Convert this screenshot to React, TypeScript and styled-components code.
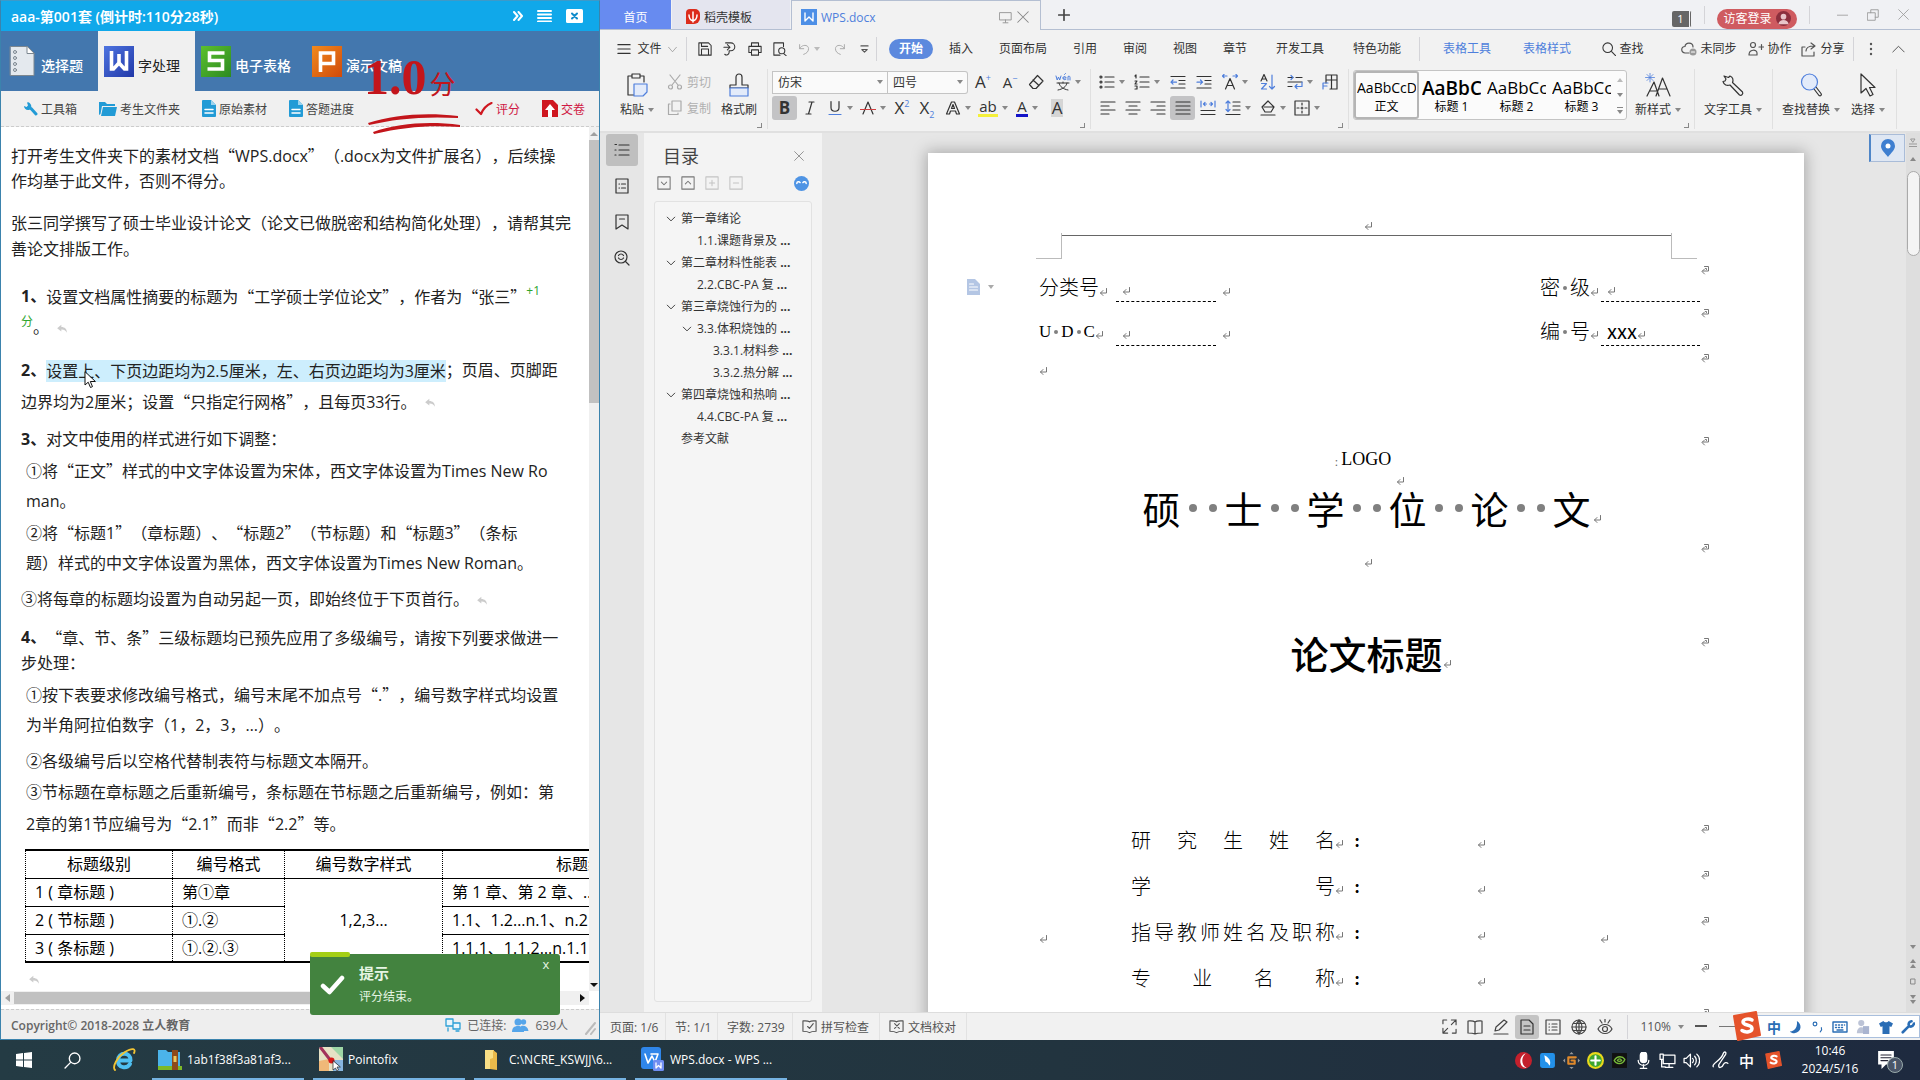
import React from "react";
import styled, { createGlobalStyle, css } from "styled-components";

const UI = `"Open Sans", "Noto Sans CJK SC", sans-serif`;
const CJK = `"Noto Sans CJK SC", sans-serif`;
const SERIF = `"Liberation Serif", "Noto Sans CJK SC", serif`;

const Global = createGlobalStyle`
  * { box-sizing: border-box; }
  body { margin: 0; font-family: ${UI}; font-size: 12px; color: #333; text-spacing-trim: space-all; overflow: hidden; }
  button, select, input { font: inherit; color: inherit; margin: 0; }
  button { background: none; border: 0; padding: 0; cursor: pointer; white-space: nowrap; }
  p, h1, h2, ul { margin: 0; padding: 0; font-weight: inherit; }
  svg { flex: none; display: block; }
`;

/* ---------- icons ---------- */
type IcProps = { w?: number; h?: number; box?: string; c?: string; sw?: number; fill?: string; children?: React.ReactNode; d?: string };
const Ic = ({ w = 16, h, box = "0 0 16 16", c = "#444", sw = 1.2, fill = "none", d, children }: IcProps) => (
  <svg width={w} height={h ?? w} viewBox={box} fill={fill} stroke={c} strokeWidth={sw} strokeLinejoin="round" strokeLinecap="round" aria-hidden="true">
    {d && <path d={d} />}
    {children}
  </svg>
);
const Caret = ({ c = "#888" }: { c?: string }) => (
  <Ic w={6} h={4} box="0 0 6 4" c="none" fill={c} d="M0 0h6L3 4z" />
);
const Mark = () => <Ic w={9} h={9} box="0 0 9 9" c="#777" sw={1} d="M7.500.5v4.500h-6M4 2.500L1.500 5L4 7.500" />;
const EndMark = () => <Ic w={10} h={10} box="0 0 10 10" c="#777" sw={1} d="M4.500 1.500h4v4.500h-6M4.500 4L2 6.500L4.500 9M5.500 3.500h1v1" />;
const Undo = () => <Ic w={12} h={10} box="0 0 14 12" c="none" fill="#ccc" d="M5 1L0 5l5 4V6.500c3-.2 5 .8 6.500 4C12 6 9 3.500 5 3.500z" />;
const Pointer = () => (
  <Ic w={12} h={18} box="0 0 12 18" c="#111" sw={1} fill="#fff" d="M1 1v13l3.200-2.800L6.500 16.500l2-.9L6.300 10.500H11z" />
);

/* ---------- shell ---------- */
const Screen = styled.div`display: flex; flex-direction: column; height: 100vh; overflow: hidden;`;
const Windows = styled.div`display: flex; flex: 1; min-height: 0;`;

/* ---------- exam panel ---------- */
const Exam = styled.section`
  position: relative; flex: none; width: 600px; display: flex; flex-direction: column;
  background: #fff; border: 1px solid #3b83ad; border-top-color: #3d9ac9;
`;
const ExamTitle = styled.header`
  height: 30px; flex: none; background: #10a8ea; color: #fff; display: flex; align-items: center;
  padding: 0 16px 0 10px; font-size: 14px; font-weight: 600; gap: 14px;
  span { flex: 1; }
`;
const ExamTabs = styled.nav`height: 60px; flex: none; display: flex; background: #4377ae;`;
const ExamTab = styled.button<{ $on?: boolean }>`
  display: flex; align-items: center; gap: 4px; padding: 0 15px 0 6px; font-size: 14px;
  color: ${(p) => (p.$on ? "#222" : "#fff")}; background: ${(p) => (p.$on ? "#f0f0f0" : "none")};
  font-weight: ${(p) => (p.$on ? 400 : 500)};
  span { padding-top: 8px; }
`;
const ExamTools = styled.div`
  height: 36px; flex: none; display: flex; align-items: center; background: #f0f0f0; padding: 0 14px 0 22px;
  border-bottom: 1px dashed #ccc;
`;
const ExamTool = styled.button<{ $red?: boolean }>`
  display: flex; align-items: center; gap: 3px; margin-right: 22px; font-size: 12px; height: 24px;
  color: ${(p) => (p.$red ? "#cf1743" : "#444")};
  &:last-child { margin-right: 0; }
`;
const Push = styled.div`flex: 1;`;
const Reader = styled.div`flex: 1; min-height: 0; display: flex;`;
const Paper = styled.article`
  flex: 1; min-width: 0; overflow: hidden; padding: 15px 0 0 10px; font-size: 16px; color: #222; background: #fff;
`;
const Block = styled.div<{ $lh?: number; $in?: number; $gap?: number }>`
  line-height: ${(p) => p.$lh ?? 31}px; padding-left: ${(p) => p.$in ?? 10}px; margin-bottom: ${(p) => p.$gap ?? 0}px;
  & > p { height: ${(p) => p.$lh ?? 31}px; display: flex; white-space: pre; }
`;
const Cn = styled.span`font-family: ${CJK};`;
const Lit = styled.mark`background: #cdeefd; color: inherit; height: 22px; line-height: 22px; align-self: center;`;
const Score = styled.sup`color: #2fa52f; font-size: 12px; line-height: 20px; align-self: flex-start;`;
const After = styled.span`padding: 12px 0 0 8px;`;

const Mixed = ({ t }: { t: string }) => (
  <span>{t.split(/([“”]+)/).map((s, i) => (i % 2 ? <Cn key={i}>{s}</Cn> : s))}</span>
);
const Row = ({ t, n, children }: { t?: string; n?: string; children?: React.ReactNode }) => (
  <p>
    {n && <b>{n}</b>}
    {t && <Mixed t={t} />}
    {children}
  </p>
);

const Levels = styled.table`
  border-collapse: collapse; table-layout: fixed; width: 740px; margin: 10px 0 0 14px; color: #000; font-size: 16px;
  border-top: 2px solid #000; border-bottom: 2px solid #000;
  th, td { height: 28px; padding: 0 9px; line-height: 24px; border: 1px solid #000; border-left: 1px dotted #000; border-right: 1px dotted #000; font-weight: 400; text-align: left; white-space: pre; }
  th { text-align: center; border-top: 0; }
  td[rowspan] { text-align: center; }
`;
const Track = styled.div<{ $across?: boolean }>`
  flex: none; background: #f0f0f0; display: flex; align-items: center; gap: 4px;
  ${(p) => (p.$across ? css`height: 14px; padding: 0 4px; margin-right: 10px;` : css`width: 10px; flex-direction: column; padding: 5px 0 4px;`)}
`;
const Thumb = styled.div<{ $w?: string; $h?: string }>`
  background: #c1c1c1; width: ${(p) => p.$w ?? "100%"}; height: ${(p) => p.$h ?? "100%"};
`;
const ExamFoot = styled.footer`
  height: 30px; flex: none; margin-top: 4px; border-top: 1px dashed #ccc; background: #eee; color: #666; font-size: 12px;
  display: flex; align-items: center; padding: 0 3px 0 10px; gap: 6px;
  b { flex: 1; font-weight: 600; }
`;
const Grade = styled.div`
  position: absolute; left: 363px; top: 44px; width: 96px; color: #c3151b; pointer-events: none;
  div { display: flex; align-items: baseline; height: 64px; font-family: ${SERIF}; }
  strong { font-size: 50px; line-height: 64px; font-weight: 700; }
  span { font-size: 26px; line-height: 64px; margin-left: 3px; }
`;
const Toast = styled.aside`
  position: absolute; left: 309px; bottom: 24px; width: 250px; height: 61px; background: #43833f; color: #e6f5e4;
  border-radius: 3px; display: flex; align-items: center; gap: 14px; padding: 0 6px 0 10px;
  &::before { content: ""; position: absolute; left: 0; top: -2px; width: 40px; height: 5px; border-radius: 2px; background: #a4cf16; }
  div { flex: 1; display: flex; flex-direction: column; gap: 4px; line-height: 20px; }
  b { font-size: 15px; }
  button { align-self: flex-start; line-height: 20px; font-size: 13px; width: 16px; }
`;
const Float = styled.div<{ $x: number; $y: number }>`position: absolute; left: ${(p) => p.$x}px; top: ${(p) => p.$y}px; pointer-events: none;`;

const AppTile = ({ from, to, d }: { from: string; to: string; d: string }) => (
  <svg width="30" height="31" viewBox="0 0 30 31" aria-hidden="true">
    <defs>
      <linearGradient id={"g" + to.slice(1)} x1="0" y1="0" x2="1" y2="1">
        <stop offset="0" stopColor={from} />
        <stop offset="1" stopColor={to} />
      </linearGradient>
    </defs>
    <rect width="30" height="31" fill={`url(#g${to.slice(1)})`} />
    <path d={d} fill="none" stroke="#fff" strokeWidth="3.600" />
  </svg>
);

const DocIcon = () => (
  <Ic w={14} h={17} box="0 0 14 17" c="none" fill="#229bd6">
    <path d="M1 0h8l5 5v11a1 1 0 0 1-1 1H1a1 1 0 0 1-1-1V1a1 1 0 0 1 1-1z" />
    <path d="M9 0v5h5z" fill="#9bd3ee" />
    <path d="M3 9.500h8M3 13h8" stroke="#fff" strokeWidth="1.500" />
  </Ic>
);

const ExamPanel = () => (
  <Exam>
    <ExamTitle>
      <span>aaa-第001套 (倒计时:110分28秒)</span>
      <Ic w={10} h={10} box="0 0 10 10" c="#fff" sw={2} d="M1 1l3.500 4L1 9M5.500 1L9 5L5.500 9" />
      <Ic w={15} h={12} box="0 0 15 12" c="#fff" sw={2} d="M1 1h13M1 4.500h13M1 8h13M1 11.500h13" />
      <Ic w={17} h={14} box="0 0 17 14" c="#0f8ccb" sw={2}>
        <rect width="17" height="14" rx="1.500" fill="#fff" stroke="none" />
        <path d="M6 4.500l5 5M11 4.500l-5 5" />
      </Ic>
    </ExamTitle>
    <ExamTabs>
      <ExamTab>
        <Ic w={30} h={31} box="0 0 30 31" c="#7c8790" sw={1}>
          <path d="M3.500.5H20l7 7v22H3.500z" fill="#e4e9ee" />
          <path d="M20 .5v7h7z" fill="#fff" />
          <circle cx="8" cy="6" r="1.500" /><circle cx="8" cy="12" r="1.500" /><circle cx="8" cy="18" r="1.500" /><circle cx="8" cy="24" r="1.500" />
        </Ic>
        <span>选择题</span>
      </ExamTab>
      <ExamTab $on><AppTile from="#4e74e0" to="#2138a8" d="M7.500 5v18h2L15 17l5.500 6h2V5M15 8v10" /><span>字处理</span></ExamTab>
      <ExamTab><AppTile from="#5cc02c" to="#2c8a22" d="M23.500 7H8.500v7.500h13V23H6.500" /><span>电子表格</span></ExamTab>
      <ExamTab><AppTile from="#f28a1c" to="#cf4a0c" d="M8.500 26V7h13v10.500h-13" /><span>演示文稿</span></ExamTab>
    </ExamTabs>
    <ExamTools>
      <ExamTool>
        <Ic w={15} h={15} box="0 0 15 15" c="#229bd6" sw={3}><path d="M8 7.500l5 5.500" /><path d="M4 1.500l1 3-1.500 1.500-2.500-1C1 8 4 10 7 8.500 9 7 9 3 5.500 1.200z" fill="#229bd6" stroke="none" /></Ic>
        工具箱
      </ExamTool>
      <ExamTool>
        <Ic w={18} h={15} box="0 0 18 15" c="none" fill="#229bd6"><path d="M0 1h6l2 2h8v2H3L1.500 13 0 14z" /><path d="M4 6h14l-2 9H2z" /></Ic>
        考生文件夹
      </ExamTool>
      <ExamTool><DocIcon />原始素材</ExamTool>
      <ExamTool><DocIcon />答题进度</ExamTool>
      <Push />
      <ExamTool $red><Ic w={18} h={14} box="0 0 18 14" c="#cf1720" sw={2.2} d="M1.500 7.500L6 12C8 7 12 3 16.500 1" />评分</ExamTool>
      <ExamTool $red>
        <Ic w={16} h={17} box="0 0 16 17" c="none" fill="#cf1720"><path d="M0 0h11l5 5v12H0z" /><path d="M8 4l5 6H10v7H6v-7H3z" fill="#fff" /></Ic>
        交卷
      </ExamTool>
    </ExamTools>
    <Reader>
      <Paper>
        <Block $lh={26} $in={0} $gap={16}>
          <Row t="打开考生文件夹下的素材文档“WPS.docx”（.docx为文件扩展名），后续操" />
          <Row t="作均基于此文件，否则不得分。" />
        </Block>
        <Block $lh={26} $in={0} $gap={19}>
          <Row t="张三同学撰写了硕士毕业设计论文（论文已做脱密和结构简化处理），请帮其完" />
          <Row t="善论文排版工作。" />
        </Block>
        <Block $gap={12}>
          <Row n="1、" t="设置文档属性摘要的标题为“工学硕士学位论文”，作者为“张三”"><Score>+1</Score></Row>
          <Row><Score>分</Score>。<After><Undo /></After></Row>
        </Block>
        <Block $gap={7}>
          <Row n="2、"><Lit>设置上、下页边距均为2.5厘米，左、右页边距均为3厘米</Lit>；页眉、页脚距</Row>
          <Row t="边界均为2厘米；设置“只指定行网格”，且每页33行。"><After><Undo /></After></Row>
        </Block>
        <Block><Row n="3、" t="对文中使用的样式进行如下调整：" /></Block>
        <Block $in={15} $gap={5}>
          <Row t="①将“正文”样式的中文字体设置为宋体，西文字体设置为Times New Ro" />
          <Row t="man。" />
          <Row t="②将“标题1”（章标题）、“标题2”（节标题）和“标题3”（条标" />
          <Row t="题）样式的中文字体设置为黑体，西文字体设置为Times New Roman。" />
        </Block>
        <Block $gap={9}><Row t="③将每章的标题均设置为自动另起一页，即始终位于下页首行。"><After><Undo /></After></Row></Block>
        <Block $lh={26} $gap={3}>
          <Row n="4、" t="“章、节、条”三级标题均已预先应用了多级编号，请按下列要求做进一" />
          <Row t="步处理：" />
        </Block>
        <Block $in={15} $gap={5}>
          <Row t="①按下表要求修改编号格式，编号末尾不加点号“.”，编号数字样式均设置" />
          <Row t="为半角阿拉伯数字（1，2，3，…）。" />
        </Block>
        <Block $in={15}>
          <Row t="②各级编号后以空格代替制表符与标题文本隔开。" />
          <Row t="③节标题在章标题之后重新编号，条标题在节标题之后重新编号，例如：第" />
          <Row t="2章的第1节应编号为“2.1”而非“2.2”等。" />
        </Block>
        <Levels>
          <colgroup><col width="147" /><col width="112" /><col width="158" /><col width="323" /></colgroup>
          <thead><tr><th>标题级别</th><th>编号格式</th><th>编号数字样式</th><th>标题编号示例</th></tr></thead>
          <tbody>
            <tr><td>1 ( 章标题 )</td><td>第①章</td><td rowSpan={3}>1,2,3…</td><td>第 1 章、第 2 章、…第 n 章</td></tr>
            <tr><td>2 ( 节标题 )</td><td>①.②</td><td>1.1、1.2…n.1、n.2</td></tr>
            <tr><td>3 ( 条标题 )</td><td>①.②.③</td><td>1.1.1、1.1.2…n.1.1、n.1.2</td></tr>
          </tbody>
        </Levels>
        <Block><Row><After><Undo /></After></Row></Block>
      </Paper>
      <Track>
        <Ic w={8} h={4} box="0 0 8 4" c="none" fill="#a0a0a0" d="M4 0L8 4H0z" />
        <Thumb $h="263px" />
        <Push />
        <Ic w={8} h={4} box="0 0 8 4" c="none" fill="#111" d="M0 0h8L4 4z" />
      </Track>
    </Reader>
    <Track $across>
      <Ic w={5} h={8} box="0 0 5 8" c="none" fill="#a0a0a0" d="M5 0v8L0 4z" />
      <Thumb $w="400px" $h="12px" />
      <Push />
      <Ic w={5} h={8} box="0 0 5 8" c="none" fill="#111" d="M0 0v8l5-4z" />
    </Track>
    <ExamFoot>
      <b>Copyright© 2018-2028 立人教育</b>
      <Ic w={16} h={14} box="0 0 16 14" c="#2a9fd6" sw={1.3}><path d="M1 1h7v7H1zM8 5h7v6H8zM3 10v3M11 13h3" fill="#eaf6fc" /></Ic>
      已连接:
      <Ic w={17} h={14} box="0 0 17 14" c="none" fill="#55a5ea"><circle cx="11.500" cy="4" r="2.700" /><path d="M9 8c4-1 7 1 7.500 5H10z" /><circle cx="6" cy="4" r="3.500" /><path d="M0 14c0-4 2-6 6-6s6 2 6 6z" /></Ic>
      639人
      <Ic w={22} h={20} box="0 0 22 20" c="#bbb" sw={2} d="M12 19L21 8M17 19l4-5" />
    </ExamFoot>
    <Grade>
      <div><strong>1.0</strong><span>分</span></div>
      <Ic w={96} h={26} box="0 0 96 26" c="none" fill="#c3151b">
        <path d="M4 14C30 6 60 3 94 7L94 9C60 7 30 10 5 16Z" />
        <path d="M9 23C35 14 65 12 96 16L96 18C65 16 40 18 10 25Z" />
      </Ic>
    </Grade>
    <Toast role="status">
      <Ic w={25} h={20} box="0 0 25 20" c="#fff" sw={4.5} d="M3 11l6.500 6L22 3" />
      <div><b>提示</b><span>评分结束。</span></div>
      <button aria-label="关闭提示">x</button>
    </Toast>
    <Float $x={83} $y={370}><Pointer /></Float>
  </Exam>
);

/* ---------- WPS window ---------- */
const Wps = styled.section`flex: 1; min-width: 0; display: flex; flex-direction: column; background: #f2f2f2;`;
const TabBar = styled.header`height: 30px; flex: none; display: flex; align-items: stretch; background: #f0f1f4; border-bottom: 1px solid #b4bfd2;`;
const DocTab = styled.button<{ $w: number; $kind: "home" | "idle" | "on" }>`
  width: ${(p) => p.$w}px; display: flex; align-items: center; gap: 4px; padding: 4px 10px 0 14px; font-size: 12px;
  ${(p) => p.$kind === "home" && css`background: #678bf0; color: #fff; justify-content: center; padding: 4px 0 0; margin-right: 1px;`}
  ${(p) => p.$kind === "idle" && css`background: #e4e5ef; margin-right: 1px;`}
  ${(p) => p.$kind === "on" && css`background: #f2f2f2; color: #4f7fdc; border: 1px solid #b4bfd2; border-bottom: 0; padding-left: 9px; padding-top: 3px; height: 30px;`}
`;
const TabTail = styled.div`flex: 1; display: flex; align-items: center; padding: 0 10px 0 17px;`;
const VLine = styled.i<{ $h?: number; $m?: string }>`width: 1px; height: ${(p) => p.$h ?? 18}px; margin: ${(p) => p.$m ?? "0"}; background: #d4d4d8; flex: none;`;
const Count = styled.span`width: 20px; height: 16px; margin-top: 8px; background: #666; color: #fff; border-radius: 2px; font-size: 11px; line-height: 16px; text-align: center; border-right: 3px double #f0f1f4;`;
const Login = styled.button`
  width: 80px; height: 20px; margin-top: 8px; border-radius: 10px; background: #cf5b60; color: #fff; display: flex; align-items: center; justify-content: center; gap: 4px; line-height: 20px;
`;
const WindowButtons = styled.div`display: flex; align-items: center; gap: 19px; padding-right: 1px;`;
const MenuBar = styled.nav`height: 38px; flex: none; display: flex; align-items: center; padding-left: 8px;`;
const MenuItem = styled.button<{ $w?: number; $tone?: "on" | "blue" }>`
  width: ${(p) => (p.$w ? p.$w + "px" : "auto")}; height: 20px; line-height: 20px; display: flex; align-items: center; justify-content: center; gap: 3px; flex: none;
  ${(p) => p.$tone === "on" && css`background: #5c89de; color: #fff; border-radius: 10px; font-weight: 600;`}
  ${(p) => p.$tone === "blue" && css`color: #4f7fdc;`}
`;
const FileMenu = styled(MenuItem)`gap: 6px;`;
const MenuEnd = styled.div`display: flex; align-items: center; gap: 19px; padding-right: 15px;`;
const Ribbon = styled.div`height: 65px; flex: none; display: flex; padding: 1px 0 0 8px; border-bottom: 2px solid #e0e0e0;`;
const Group = styled.div`display: flex; position: relative; flex: none; padding: 0 5px 0 4px; border-right: 1px solid #e0e0e0; height: 60px;`;
const Launcher = styled.i`position: absolute; right: 5px; bottom: 1px; width: 5px; height: 5px; border-right: 1px solid #888; border-bottom: 1px solid #888;`;
const Big = styled.button<{ $w: number }>`
  width: ${(p) => p.$w}px; display: flex; flex-direction: column; align-items: center; padding-top: 4px; gap: 4px; height: 52px;
  span { display: flex; align-items: center; gap: 4px; line-height: 18px; }
`;
const Stack = styled.div`display: flex; flex-direction: column;`;
const Line = styled.div`display: flex; align-items: center; height: 26px;`;
const Tool = styled.button<{ $w?: number; $on?: boolean; $dim?: boolean }>`
  width: ${(p) => p.$w ?? 25}px; height: 24px; display: flex; align-items: center; justify-content: center; gap: 4px; border-radius: 3px; flex: none;
  background: ${(p) => (p.$on ? "#c3c3c5" : "none")}; color: ${(p) => (p.$dim ? "#b0b0b0" : "#333")};
`;
const Glyph = styled.span<{ $s?: number; $c?: string; $bar?: string; $bg?: string; $fw?: number }>`
  font-size: ${(p) => p.$s ?? 17}px; line-height: 18px; height: 18px; font-weight: ${(p) => p.$fw ?? 400}; padding: 0 1px;
  color: ${(p) => p.$c ?? "#333"}; background: ${(p) => p.$bg ?? "none"}; border-bottom: ${(p) => (p.$bar ? `3px solid ${p.$bar}` : "0")};
  ${(p) => p.$bar && css`line-height: 14px; font-size: 15px;`}
  sup, sub { font-size: 9px; color: #4f7fdc; line-height: 8px; }
`;
const Combo = styled.label<{ $w: number }>`
  position: relative; width: ${(p) => p.$w}px; height: 23px; display: flex; align-items: center; background: #fafafa; border: 1px solid #c4c4c4; padding-right: 4px;
  & + & { border-left: 0; border-radius: 0 3px 3px 0; }
  select { appearance: none; border: 0; background: none; flex: 1; padding: 0 0 0 5px; font-size: 12px; outline: 0; height: 21px; }
`;
const Gallery = styled.div`display: flex; width: 274px; height: 50px; border: 1px solid #c4c4c4; border-radius: 3px; background: #fbfbfb; margin-top: 1px;`;
const StyleCell = styled.button<{ $on?: boolean; $s: number; $fw?: number }>`
  width: 65px; overflow: hidden; display: flex; flex-direction: column; align-items: flex-start; padding: 4px 1px 0; color: #000;
  border: 2px solid ${(p) => (p.$on ? "#b5b5b5" : "transparent")}; border-radius: 3px;
  b { font-size: ${(p) => p.$s}px; line-height: 22px; font-weight: ${(p) => p.$fw ?? 400}; width: 59px; overflow: hidden; text-align: left; }
  span { align-self: center; line-height: 20px; }
`;
const GalleryNav = styled.div`flex: 1; display: flex; flex-direction: column; align-items: center; justify-content: space-between; padding: 7px 0 5px;`;

const BLUE = "#4f7fdc";
const G = "#333";
const bigIcons = {
  paste: <Ic w={24} box="0 0 24 24" c={G}><path d="M7 3H3v19h8M15 3h4v6M7 1h8v4H7z" /><path d="M9 11h13v8l-4 4H9z" fill="#e3ebfa" stroke={BLUE} /></Ic>,
  brush: <Ic w={24} box="0 0 24 24" c={G}><path d="M9 12V4a3 3 0 0 1 6 0v8h6v3H3v-3z" /><path d="M3 15h18v8H3z" fill="#e3ebfa" stroke={BLUE} /></Ic>,
  style: <Ic w={26} h={24} box="0 0 26 24" c={G}><path d="M2 23L9 9l5 14M4.500 18h8M11 23L17.500 5 25 23M14 16h8" /><path d="M5 0v9M.5 4.500h9M2 1.500l6 6M8 1.500l-6 6" stroke={BLUE} strokeWidth={0.8} /></Ic>,
  wrench: <Ic w={24} box="0 0 24 24" c={G} d="M3 3l4.500 1.500L9 3C12 4 12.500 7 11.500 9.500L21.500 19c1 2-1 4-3 3L9 12C6 13 3 12 2 8.500L4 8 5 6z" />,
  find: <Ic w={24} box="0 0 24 24" c={G}><path d="M15 16l5 6.500c1.500 1 3-.5 2-2L17 14" /><circle cx="10.500" cy="9" r="8" stroke={BLUE} fill="#e3ebfa" /></Ic>,
  arrow: <Ic w={24} box="0 0 24 24" c={G} d="M5 1v19l5-4.500 4 7.500 3-1.500-3.500-7H19z" />,
};
const lines = (a: string) => <Ic d={a} c={G} />;
const bullets = <Ic c={G}><path d="M6 3h9M6 8h9M6 13h9" /><circle cx="2" cy="3" r="1" /><circle cx="2" cy="8" r="1" /><circle cx="2" cy="13" r="1" /></Ic>;

const Ribbons = () => (
  <Ribbon>
    <Group>
      <Big $w={50}>{bigIcons.paste}<span>粘贴<Caret /></span></Big>
      <Stack>
        <Line><Tool $w={54} $dim><Ic c="#aaa" d="M3 1l8 10M13 1L5 11"><circle cx="3.500" cy="13" r="2" /><circle cx="12.500" cy="13" r="2" /></Ic>剪切</Tool></Line>
        <Line><Tool $w={54} $dim><Ic c="#aaa" d="M5 1h9v10H5zM3 4H1.500v10.500H11V13" />复制</Tool></Line>
      </Stack>
      <Big $w={46}>{bigIcons.brush}<span>格式刷</span></Big>
      <Launcher />
    </Group>
    <Group>
      <Stack>
        <Line>
          <Combo $w={116}><select aria-label="字体"><option>仿宋</option></select><Caret /></Combo>
          <Combo $w={80}><select aria-label="字号"><option>四号</option></select><Caret /></Combo>
          <Tool $w={30}><Glyph>A<sup>+</sup></Glyph></Tool>
          <Tool $w={24}><Glyph $s={15}>A<sup>−</sup></Glyph></Tool>
          <Tool $w={28}><Ic c={G} d="M9.500 1.500L15 7l-7 7.500H5L1.500 10.500zM5 6l6 5.500" /></Tool>
          <Tool $w={35}><Ic w={16} h={18} box="0 0 16 18" c={BLUE} sw={1}><path d="M1 3l1.200 4L3.500 4l1.200 3L6 3M8 5h3c0-2-3-2-3 0 0 2 2 2 3 1.300M9.500 1.500L10.500.5M13 7V3.500c1.500-.8 2 0 2 1V7" /><path d="M2 10h12M8 9v1M4 10c1 4 4 6 9 7M12 10c-1 4-4 6-9 7" stroke={G} /></Ic><Caret /></Tool>
        </Line>
        <Line>
          <Tool $w={25} $on><Glyph $fw={700}>B</Glyph></Tool>
          <Tool $w={26}><Ic c={G} d="M7 2h5M4 14h5M10 2L6.500 14" /></Tool>
          <Tool $w={33}><Ic c={G}><path d="M4 1.500v6c0 5 8 5 8 0v-6" /><path d="M2 14.500h12" stroke={BLUE} /></Ic><Caret /></Tool>
          <Tool $w={34}><Ic c={G}><path d="M3 14L8 2l5 12" /><path d="M0 9.500h16" stroke="#d04040" /></Ic><Caret /></Tool>
          <Tool $w={24}><Glyph>X<sup>2</sup></Glyph></Tool>
          <Tool $w={26}><Glyph>X<sub>2</sub></Glyph></Tool>
          <Tool $w={36}><Ic c={G} d="M1.500 14L6.500 2h3l5 12h-3l-1-3h-5l-1 3zM6.500 8.500h3L8 4.500z" /><Caret /></Tool>
          <Tool $w={34}><Glyph $bar="#f4f03a">ab</Glyph><Caret /></Tool>
          <Tool $w={34}><Glyph $bar="#1414c8">A</Glyph><Caret /></Tool>
          <Tool $w={26}><Glyph $bg="#d5d5d5">A</Glyph></Tool>
        </Line>
      </Stack>
      <Launcher />
    </Group>
    <Group>
      <Stack>
        <Line>
          <Tool $w={34}>{bullets}<Caret /></Tool>
          <Tool $w={35}><Ic c={G} d="M6 3h9M6 8h9M6 13h9M1 2l1-1v3M1 7h2l-2 3h2M1 12h2v3H1" /><Caret /></Tool>
          <Tool $w={27}><Ic c={G}><path d="M1 2.500h14M9 6.500h6M9 10h6M1 14h14" /><path d="M6.500 8.200H1M3 6L1 8.200l2 2" stroke={BLUE} /></Ic></Tool>
          <Tool><Ic c={G}><path d="M1 2.500h14M9 6.500h6M9 10h6M1 14h14" /><path d="M1 8.200h5.500M4.500 6l2 2.200-2 2" stroke={BLUE} /></Ic></Tool>
          <Tool $w={38}><Ic c={G}><path d="M3.500 15L8 4.500 12.500 15M5 11.500h6" /><path d="M5 2H.5M2 .5L.5 2 2 3.500M11 2h4.500M14 .5L15.500 2 14 3.500" stroke={BLUE} /></Ic><Caret /></Tool>
          <Tool $w={28}><Ic c={G}><path d="M1 7l3-6.500L7 7M2 5h4" /><path d="M1.500 9.500h5l-5 5.500h5M12 1v14M9.500 12.500L12 15l2.500-2.500" stroke={BLUE} /></Ic></Tool>
          <Tool $w={35}><Ic c={G}><path d="M1 3.500h5M9 3.500h6M1 8h14M1 12.500h4" /><path d="M4 1.500l2 2-2 2M15 8v4.500H8M10 10.500l-2 2 2 2" stroke={BLUE} /></Ic><Caret /></Tool>
          <Tool $w={26}><Ic c={G}><path d="M4 9V1h11v14H8M4 6h11M9.500 1v14" /><path d="M1 15V9h5M1 12h4" stroke={BLUE} /></Ic></Tool>
        </Line>
        <Line>
          <Tool>{lines("M1 2h14M1 6h8M1 10h14M1 14h8")}</Tool>
          <Tool>{lines("M1 2h14M4 6h8M1 10h14M4 14h8")}</Tool>
          <Tool>{lines("M1 2h14M7 6h8M1 10h14M7 14h8")}</Tool>
          <Tool $on>{lines("M1 2h14M1 6h14M1 10h14M1 14h14")}</Tool>
          <Tool><Ic c={G}><path d="M1 10.500h14M1 14.500h14" /><path d="M1 1v6M15 1v6M3.500 4h3M9.500 4h3M5 2.500L3.500 4 5 5.500M11 2.500L12.500 4 11 5.500" stroke={BLUE} /></Ic></Tool>
          <Tool $w={36}><Ic c={G}><path d="M8 2h7M8 6h7M8 10h7M1 14.500h14" /><path d="M3 1v10M1 3l2-2 2 2M1 9.500l2 2 2-2" stroke={BLUE} /></Ic><Caret /></Tool>
          <Tool $w={34}><Ic c={G} d="M8 1l6 6-3 5H5L2 7zM1 15h14M4 7h9" /><Caret /></Tool>
          <Tool $w={34}><Ic c={G}><path d="M1 1h14v14H1z" /><path d="M8 3v10M3 8h10" strokeDasharray="2 2" /></Ic><Caret /></Tool>
        </Line>
      </Stack>
      <Launcher />
    </Group>
    <Group>
      <Gallery>
        <StyleCell $on $s={14}><b>AaBbCcD</b><span>正文</span></StyleCell>
        <StyleCell $s={19} $fw={600}><b>AaBbCc</b><span>标题 1</span></StyleCell>
        <StyleCell $s={17}><b>AaBbCc</b><span>标题 2</span></StyleCell>
        <StyleCell $s={17}><b>AaBbCc</b><span>标题 3</span></StyleCell>
        <GalleryNav>
          <Ic w={6} h={4} box="0 0 6 4" c="none" fill="#bbb" d="M3 0l3 4H0z" />
          <Caret />
          <Ic w={6} h={7} box="0 0 6 7" c="none" fill="#888" d="M0 0h6v1H0zM0 3h6L3 7z" />
        </GalleryNav>
      </Gallery>
      <Big $w={62}>{bigIcons.style}<span>新样式<Caret /></span></Big>
      <Launcher />
    </Group>
    <Group><Big $w={68}>{bigIcons.wrench}<span>文字工具<Caret /></span></Big></Group>
    <Group>
      <Big $w={68}>{bigIcons.find}<span>查找替换<Caret /></span></Big>
      <Big $w={46}>{bigIcons.arrow}<span>选择<Caret /></span></Big>
    </Group>
  </Ribbon>
);

const Work = styled.div`flex: 1; min-height: 0; display: flex;`;
const Rail = styled.nav`width: 44px; flex: none; background: #e6e6e6; padding: 1px 6px; display: flex; flex-direction: column; gap: 4px;`;
const RailButton = styled.button<{ $on?: boolean }>`height: 32px; width: 32px; border-radius: 3px; display: grid; place-items: center; background: ${(p) => (p.$on ? "#bfbfbf" : "none")};`;
const Toc = styled.aside`width: 178px; flex: none; background: #f3f3f3; display: flex; flex-direction: column; padding: 0 10px 10px;`;
const TocHead = styled.div`display: flex; align-items: center; justify-content: space-between; height: 38px; padding: 8px 8px 0 9px; h2 { font-size: 18px; color: #444; line-height: 26px; }`;
const TocTools = styled.div`display: flex; align-items: center; gap: 10px; height: 24px; padding: 0 3px; margin-bottom: 6px;`;
const Tree = styled.ul`flex: 1; list-style: none; border: 1px solid #e2e2e2; border-radius: 3px; background: #f5f5f5; padding: 6px 0 0 11px;`;
const Branch = styled.li<{ $lv: number }>`
  height: 22px; line-height: 22px; display: flex; align-items: center; gap: 5px; padding-left: ${(p) => p.$lv * 16}px; white-space: pre; color: #333;
  i { width: 10px; display: block; }
  b { font-weight: 700; }
`;
const toc: [number, boolean, string, boolean][] = [
  [0, true, "第一章绪论", false], [1, false, "1.1.课题背景及", true], [0, true, "第二章材料性能表", true], [1, false, "2.2.CBC-PA 复", true],
  [0, true, "第三章烧蚀行为的", true], [1, true, "3.3.体积烧蚀的", true], [2, false, "3.3.1.材料参", true], [2, false, "3.3.2.热分解", true],
  [0, true, "第四章烧蚀和热响", true], [1, false, "4.4.CBC-PA 复", true], [0, false, "参考文献", false],
];

const Canvas = styled.main`flex: 1; min-width: 0; position: relative; overflow: hidden; background: #e6e6e6; padding: 20px 0 0 4px;`;
const Sheet = styled.article`
  position: relative; width: 876px; min-height: 1240px; margin: 0 auto; background: #fff; box-shadow: 0 0 14px 2px rgba(0, 0, 0, 0.26);
  padding: 67px 92px 0 108px; font-family: ${SERIF}; font-size: 20px; color: #000;
`;
const HeadMark = styled.div`height: 13px; display: flex; justify-content: center; padding: 2px 12px 0 0;`;
const HeadRule = styled.div`
  display: grid; grid-template-columns: 26px 1fr 26px; height: 26px; margin-right: 15px;
  i { border-bottom: 1px solid #bbb; }
  i:first-child { border-right: 1px solid #bbb; }
  i:last-child { border-left: 1px solid #bbb; }
  div { border-top: 1px solid #666; margin-top: 2px; }
`;
const Columns = styled.div`display: flex;`;
const Main = styled.div`flex: 1;`;
const Ends = styled.div`width: 12px; flex: none;`;
const End = styled.div<{ $h: number }>`height: ${(p) => p.$h}px; display: flex; align-items: flex-end;`;
const Info = styled.div`
  display: grid; grid-template-columns: 80px 100px 1fr 64px 99px; height: 43px; font-weight: 300;
  & > div { display: flex; align-items: center; padding: 15px 0 0 6px; line-height: 28px; white-space: pre; }
  & > div:nth-child(1), & > div:nth-child(4) { padding-left: 3px; }
  svg { margin-top: 8px; }
  & > div:nth-child(2), & > div:last-child { border-bottom: 1px dashed #000; }
`;
const Latin = styled.span`font-size: 17px; display: flex; align-items: center;`;
const Code = styled(Cn)`font-weight: 400;`;
const Dot = styled.i<{ $big?: boolean }>`
  width: ${(p) => (p.$big ? 8 : 4)}px; height: ${(p) => (p.$big ? 8 : 4)}px; border-radius: 50%; background: #808080; margin: 0 ${(p) => (p.$big ? 6 : 3)}px; flex: none;
`;
const Space = styled.div<{ $h: number }>`height: ${(p) => p.$h}px; padding: 22px 0 0 3px;`;
const Center = styled.div<{ $h: number; $l?: number }>`height: ${(p) => p.$h}px; display: flex; align-items: center; justify-content: center; padding-left: ${(p) => p.$l ?? 0}px;`;
const Logo = styled(Center)`font-size: 18px; white-space: pre; padding-right: 10px; small { font-size: 12px; color: #666; padding-top: 6px; }`;
const Thesis = styled(Center)`font-family: ${CJK}; font-size: 38px; line-height: 46px; padding-bottom: 6px; span { width: 42px; text-align: center; } svg { margin-top: 22px; }`;
const PaperTitle = styled(Center)`font-family: ${CJK}; font-size: 38px; line-height: 48px; font-weight: 500; padding-bottom: 6px; svg { margin-top: 22px; }`;
const Field = styled.div`
  display: grid; grid-template-columns: 95px 204px 10px 24px 108px 120px 1fr; align-items: center; height: 46px; font-family: ${CJK}; font-weight: 300; line-height: 28px;
  span { display: flex; justify-content: space-between; }
  em { font-style: normal; }
  b { text-align: center; font-weight: 700; font-size: 16px; }
  svg { margin-top: 8px; }
  & > div { padding: 6px 0 0 3px; }
`;
const ParaButton = styled.button`position: absolute; left: 39px; top: 126px; display: flex; align-items: center; gap: 8px;`;
const PinButton = styled.button`position: absolute; right: 1px; top: 1px; width: 36px; height: 28px; display: grid; place-items: center; background: #dfe7f3; border: 1px solid #a9bcd8; border-left: 2px solid #4f86c8;`;
const Scroll = styled.div`width: 14px; flex: none; background: #dedede; display: flex; flex-direction: column; align-items: center; padding: 5px 0 8px; gap: 10px;`;
const ScrollThumb = styled.div`width: 13px; height: 85px; border: 1px solid #aaa; border-radius: 7px; background: #f4f4f4;`;
const Status = styled.footer`height: 28px; flex: none; display: flex; align-items: center; background: #f1f1f1; color: #555; padding-left: 10px; border-top: 1px solid #ddd; position: relative; white-space: pre;`;
const Cell = styled.div<{ $w: number }>`width: ${(p) => p.$w}px; display: flex; align-items: center; gap: 4px; height: 27px; border-right: 1px solid #e2e2e2; margin-right: 9px; flex: none;`;
const View = styled.button<{ $on?: boolean }>`width: 24px; height: 24px; margin-right: 2px; display: grid; place-items: center; border-radius: 3px; background: ${(p) => (p.$on ? "#c4c4c4" : "none")};`;
const ZoomLevel = styled.button`display: flex; align-items: center; gap: 7px; margin-right: 11px;`;
const Zoom = styled.input`width: 150px; height: 1px; appearance: none; background: #777; margin: 0 51px 0 12px; &::-webkit-slider-thumb { appearance: none; width: 8px; height: 8px; }`;
const Ime = styled.div`
  position: absolute; right: 0; top: 2px; width: 176px; height: 23px; background: #fff; border: 1px solid #a9bfdd; display: flex; align-items: center; justify-content: space-between; padding: 0 4px 0 22px; color: #2a6db5; font-weight: 700; font-size: 14px;
  & > svg:first-child { position: absolute; left: -14px; top: -5px; }
`;
const SogouS = ({ s }: { s: number }) => (
  <Ic w={s} box="0 0 30 30" c="#fff" sw={3.5}><path d="M3 5L25 1l4 23-22 5z" fill="#e5532b" stroke="#e5532b" strokeWidth="2" /><path d="M21 9c-3-2-9-1-9 2 0 4 9 2 9 6.500 0 3.500-6 4.500-10 2" /></Ic>
);
const fields = ["研究生姓名", "学号", "指导教师姓名及职称", "专业名称"];
const rowEnds = [16, 43, 45, 83, 107, 94, 187, 46, 46, 47, 45];

const WpsWindow = () => (
  <Wps>
    <TabBar>
      <DocTab $w={71} $kind="home">首页</DocTab>
      <DocTab $w={118} $kind="idle">
        <Ic w={14} h={15} box="0 0 14 15" c="none" fill="#dc2c1c"><path d="M4 0h5a5 5 0 0 1 5 5v4a6 6 0 0 1-6 6H0V4a4 4 0 0 1 4-4z" /><path d="M7 13V3M7 12C4 11 3 9 3 6M7 12c3-1 4-3 4-6" stroke="#fff" strokeWidth="1.500" fill="none" /></Ic>
        稻壳模板
      </DocTab>
      <DocTab $w={250} $kind="on">
        <Ic w={16} box="0 0 16 16" c="#fff" sw={1.4}><rect width="16" height="16" fill="#4d8fe6" stroke="none" /><path d="M4 4v8l4-4 4 4V4" /></Ic>
        WPS.docx<Push />
        <Ic w={13} box="0 0 16 16" c="#999" d="M1 2h14v9H1zM8 11v3M5 14.500h6" />
        <Ic w={14} c="#888" d="M2 2l12 12M14 2L2 14" />
      </DocTab>
      <TabTail>
        <Ic w={12} c="#444" sw={2.2} d="M8 1v14M1 8h14" />
        <Push />
        <Count>1</Count>
        <VLine $m="0 12px" />
        <Login>访客登录<Ic w={15} box="0 0 16 16" c="none" fill="#8c2f3d"><circle cx="8" cy="8" r="8" /><circle cx="8" cy="6" r="3" fill="#e8c4c8" /><path d="M2.500 14c1-6 10-6 11 0z" fill="#e8c4c8" /></Ic></Login>
        <VLine $m="0 27px 0 12px" />
        <WindowButtons>
          <Ic w={11} c="#999" d="M0 9h16" />
          <Ic w={12} c="#999" d="M1 5h10v10H1zM5 5V1h10v10h-4" />
          <Ic w={11} c="#999" d="M1 1l14 14M15 1L1 15" />
        </WindowButtons>
      </TabTail>
    </TabBar>
    <MenuBar>
      <FileMenu $w={78}><Ic w={14} c={G} d="M1 3h14M1 8h14M1 13h14" />文件<Ic w={9} c="#888" d="M1 4l7 8 7-8" /></FileMenu>
      <VLine $h={24} $m="0 5px 0 0" />
      <MenuItem $w={25}><Ic w={14} c={G} d="M1 1h11l3 3v11H1zM4 15V8h8v7M4 1v4h7" /></MenuItem>
      <MenuItem $w={25}><Ic w={14} c={G} d="M3 1h6a4.500 4.500 0 0 1 0 9H7v2a3 3 0 0 1-5 2M1 6h7M5 3l3 3-3 3" /></MenuItem>
      <MenuItem $w={25}><Ic w={14} c={G} d="M4 5V1h8v4M4 12H1V5h14v7h-3M4 9h8v6H4z" /></MenuItem>
      <MenuItem $w={25}><Ic w={14} c={G} d="M8 15H1V1h11v4M12.500 13.500l2.500 2"><circle cx="10" cy="10" r="3.500" /></Ic></MenuItem>
      <MenuItem $w={34}><Ic w={13} c="#aaa" d="M2 2v5h5M2 7c3-6 11-5 11 0 0 4-3 6-6 7" /><Caret c="#bbb" /></MenuItem>
      <MenuItem $w={26}><Ic w={13} c="#aaa" d="M14 2v5H9M14 7C11 1 3 2 3 7c0 4 3 6 6 7" /></MenuItem>
      <MenuItem $w={24}><Ic w={9} box="0 0 10 10" c="#555" d="M1 1h8M2 5l3 3 3-3z" /></MenuItem>
      <VLine $h={24} $m="0 12px 0 0" />
      <MenuItem $w={44} $tone="on">开始</MenuItem>
      <MenuItem $w={56}>插入</MenuItem>
      <MenuItem $w={68}>页面布局</MenuItem>
      <MenuItem $w={56}>引用</MenuItem>
      <MenuItem $w={44}>审阅</MenuItem>
      <MenuItem $w={56}>视图</MenuItem>
      <MenuItem $w={44}>章节</MenuItem>
      <MenuItem $w={86}>开发工具</MenuItem>
      <MenuItem $w={68}>特色功能</MenuItem>
      <VLine $h={24} $m="0 8px" />
      <MenuItem $w={78} $tone="blue">表格工具</MenuItem>
      <MenuItem $w={82} $tone="blue">表格样式</MenuItem>
      <MenuItem $w={70}><Ic w={14} c={G} d="M11 11l4.500 4.500"><circle cx="6.500" cy="6.500" r="5.500" /></Ic>查找</MenuItem>
      <Push />
      <MenuItem $w={68}><Ic c="#555" d="M8 12H4a3 3 0 0 1 0-6.500C4 1 12 1 12 6"><circle cx="12" cy="11" r="3.500" fill="#999" stroke="none" /><path d="M10.500 11h3" stroke="#fff" /></Ic>未同步</MenuItem>
      <MenuItem $w={54}><Ic c="#555" d="M1 14c0-6 8-6 8-2v2zM11 6h5M13.500 3.500v5"><circle cx="5" cy="4" r="2.500" /></Ic>协作</MenuItem>
      <MenuItem $w={52}><Ic c="#555" d="M4 6H1v9h12v-4M5 10c0-4 3-5 8-5M10 2l4 3-4 3" />分享</MenuItem>
      <VLine $h={24} $m="0 15px 0 4px" />
      <MenuEnd>
        <Ic w={4} h={14} box="0 0 4 14" c="none" fill="#555"><circle cx="2" cy="2" r="1.200" /><circle cx="2" cy="7" r="1.200" /><circle cx="2" cy="12" r="1.200" /></Ic>
        <Ic w={13} c="#555" d="M1 11l7-7 7 7" />
      </MenuEnd>
    </MenuBar>
    <Ribbons />
    <Work>
      <Rail>
        <RailButton $on aria-label="目录"><Ic c={G} d="M5 3h10M5 8h10M5 13h10M1 2.500h1.500M1 8h1M1 13h1" /></RailButton>
        <RailButton aria-label="章节"><Ic c={G} d="M2 1h12v14H2zM5 6h.5M7.500 6h4M5 10h.5M7.500 10h4" /></RailButton>
        <RailButton aria-label="书签"><Ic c={G} d="M2 1h12v14l-6-4-6 4zM5.500 5h5" /></RailButton>
        <RailButton aria-label="查找"><Ic c={G} d="M11.500 11.500l3.500 3.500M4.500 5.500c1-2 4-2 5 0M9.500 8c-1 2-4 2-5 0"><circle cx="7" cy="7" r="6" /></Ic></RailButton>
      </Rail>
      <Toc>
        <TocHead><h2>目录</h2><Ic w={10} c="#777" d="M1 1l14 14M15 1L1 15" /></TocHead>
        <TocTools>
          <Ic w={14} c="#777" d="M1 1h14v14H1zM5 7l3 3 3-3" />
          <Ic w={14} c="#777" d="M1 1h14v14H1zM5 9l3-3 3 3" />
          <Ic w={14} c="#c4c4c4" d="M1 1h14v14H1zM5 8h6M8 5v6" />
          <Ic w={14} c="#c4c4c4" d="M1 1h14v14H1zM5 8h6" />
          <Push />
          <Ic w={15} c="#fff" sw={1.6}><circle cx="8" cy="8" r="8" fill="#4f94e4" stroke="none" /><path d="M3 8c0-2 2.500-2.500 3.500-1M9.500 7c1-1.500 3.500-1 3.500 1" /></Ic>
        </TocTools>
        <Tree>
          {toc.map(([lv, open, t, cut]) => (
            <Branch key={t} $lv={lv}>
              {open ? <Ic w={10} c="#444" sw={1.6} d="M2 5l6 6 6-6" /> : <i />}
              <span>{t}{cut && <b> ...</b>}</span>
            </Branch>
          ))}
        </Tree>
      </Toc>
      <Canvas>
        <Sheet>
          <HeadMark><Mark /></HeadMark>
          <HeadRule><i /><div /><i /></HeadRule>
          <Columns>
            <Main>
              <Info>
                <div>分类号<Mark /></div><div><Mark /></div><div><Mark /></div>
                <div>密<Dot />级<Mark /></div><div><Mark /></div>
              </Info>
              <Info>
                <div><Latin>U<Dot />D<Dot />C</Latin><Mark /></div><div><Mark /></div><div><Mark /></div>
                <div>编<Dot />号<Mark /></div><div><Code>xxx</Code><Mark /></div>
              </Info>
              <Space $h={99}><Mark /></Space>
              <Logo $h={30}><small>: </small>LOGO</Logo>
              <Center $h={14} $l={64}><Mark /></Center>
              <Thesis $h={46} $l={6}>
                {[..."硕士学位论文"].map((ch, i) => (
                  <React.Fragment key={ch}>{i > 0 && <><Dot $big /><Dot $big /></>}<span>{ch}</span></React.Fragment>
                ))}
                <Mark />
              </Thesis>
              <Center $h={58}><Mark /></Center>
              <Center $h={40} />
              <PaperTitle $h={48} $l={6}>论文标题<Mark /></PaperTitle>
              <Center $h={137} />
              {fields.map((f, i) => (
                <Field key={f}>
                  <div>{i === 2 && <Mark />}</div>
                  <span>{[...f].map((ch) => <em key={ch}>{ch}</em>)}</span>
                  <Mark /><b>:</b><i /><Mark />
                  <div>{i === 2 && <Mark />}</div>
                </Field>
              ))}
            </Main>
            <Ends>{rowEnds.map((h, i) => <End key={i} $h={h}><EndMark /></End>)}</Ends>
          </Columns>
          <ParaButton aria-label="段落布局">
            <Ic w={13} h={16} box="0 0 13 16" c="none" fill="#b4c6e4"><path d="M0 0h8l5 5v11H0z" /><path d="M2.500 5h4M2.500 8h8M2.500 11h8" stroke="#fff" strokeWidth="1.200" /></Ic>
            <Caret c="#aaa" />
          </ParaButton>
        </Sheet>
        <PinButton aria-label="定位"><Ic w={14} h={18} box="0 0 14 18" c="none" fill="#3f7fd0"><path d="M7 0a7 7 0 0 1 7 7c0 4-4 7-7 11C4 14 0 11 0 7a7 7 0 0 1 7-7z" /><circle cx="7" cy="7" r="2.500" fill="#fff" /></Ic></PinButton>
      </Canvas>
      <Scroll>
        <Ic w={8} h={9} box="0 0 8 9" c="#999" sw={1} d="M0 8.500h8M0 6h8M2 1h4L4 4z" />
        <Ic w={6} h={4} box="0 0 6 4" c="none" fill="#888" d="M3 0l3 4H0z" />
        <ScrollThumb />
        <Push />
        <Caret />
        <Ic w={6} h={9} box="0 0 6 9" c="none" fill="#888" d="M3 0l3 4H0zM3 5l3 4H0z" />
        <Ic w={6} h={7} box="0 0 6 7" c="#888" sw={1} d="M1 1h4v5H1z" />
        <Ic w={6} h={9} box="0 0 6 9" c="none" fill="#888" d="M0 0h6L3 4zM0 5h6L3 9z" />
      </Scroll>
    </Work>
    <Status>
      <Cell $w={56}>页面: 1/6</Cell>
      <Cell $w={43}>节: 1/1</Cell>
      <Cell $w={66}>字数: 2739</Cell>
      <Cell $w={78}><Ic w={15} c="#555" d="M8 3C6 1.500 4 2 1 2v11c3 0 5 0 7 1.500 2-1.500 4-1.500 7-1.500V2c-3 0-5-.5-7 1M6 8l2 2 4-5" />拼写检查</Cell>
      <Cell $w={78}><Ic w={15} c="#555" d="M8 3C6 1.500 4 2 1 2v11c3 0 5 0 7 1.500 2-1.500 4-1.500 7-1.500V2c-3 0-5-.5-7 1M6 5l5 5M11 5l-5 5" />文档校对</Cell>
      <Push />
      <View aria-label="全屏"><Ic w={15} c="#444" d="M10 1h5v5M6 15H1v-5M1 5V1h4M15 11v4h-4M10 6l5-5M6 10l-5 5" /></View>
      <View aria-label="阅读"><Ic w={16} c="#444" d="M8 3C6 1.500 4 2 1 2v12c3 0 5 0 7 1 2-1 4-1 7-1V2c-3 0-5-.5-7 1v12" /></View>
      <View aria-label="写作"><Ic w={16} c="#444" d="M1 15h14M2 12l1-4 8-7 3 2-8 8z" /></View>
      <View $on aria-label="页面视图"><Ic w={16} c="#333" d="M2 1h8l4 4v10H2zM5 7h6M5 11h6" /></View>
      <View aria-label="大纲"><Ic w={16} c="#444" d="M1 1h14v14H1zM4 5h.5M7 5h5M4 8h.5M7 8h5M4 11h.5M7 11h5" /></View>
      <View aria-label="网页"><Ic w={16} c="#444" d="M1 8h14M8 1v14M2.500 4.500h11M2.500 11.500h11M8 1C4 5 4 11 8 15M8 1c4 4 4 10 0 14"><circle cx="8" cy="8" r="7" /></Ic></View>
      <View aria-label="护眼"><Ic w={16} c="#444" d="M8 0v3M3 1l2 3M13 1l-2 3M1 10c3-6 11-6 14 0-3 6-11 6-14 0z"><circle cx="8" cy="10" r="2.500" /></Ic></View>
      <VLine $h={24} $m="0 12px 0 8px" />
      <ZoomLevel>110%<Caret /></ZoomLevel>
      <Ic w={12} h={3} box="0 0 12 3" c="none" fill="#555" d="M0 0h12v2H0z" />
      <Zoom type="range" aria-label="缩放" />
      <Ime>
        <SogouS s={30} />
        中
        <Ic w={14} c="none" fill="#2a6db5" d="M9 1c6 3 6 13-3 14-2 0-4-.5-5-2 6 0 9-6 8-12z" />
        <Ic w={12} c="#2a6db5" sw={1.6} d="M12.500 9c1 2 0 4-1.500 5.500"><circle cx="4" cy="4" r="2.500" /></Ic>
        <Ic w={16} c="#2a6db5" sw={1.4} d="M1 3h14v10H1zM3.500 6h1M6.500 6h1M9.500 6h1M12.500 6h.1M3.500 8.500h1M6.500 8.500h1M9.500 8.500h1M5 11h6" />
        <Ic w={14} c="none" fill="#bcc3d6"><circle cx="6" cy="3.500" r="3.500" /><path d="M1 15C1 6 11 6 11 15z" /><path d="M8 7h7v9H8z" fill="#a9b4d0" /></Ic>
        <Ic w={14} c="none" fill="#2a6db5" d="M5 1c1 2 5 2 6 0l5 3-2 4-2-1v9H4V7L2 8 0 4z" />
        <Ic w={14} c="#2a6db5" sw={3} d="M2 14l7-7M12 1.500C8 2 8 7 10.500 7.500c3 .5 4-2 4.500-3.500" />
      </Ime>
    </Status>
  </Wps>
);

/* ---------- taskbar ---------- */
const Bar = styled.footer`height: 40px; flex: none; display: flex; align-items: stretch; color: #fff; background: linear-gradient(90deg, #243b44, #22343f 55%, #1e2a3f);`;
const Quick = styled.button<{ $w: number }>`width: ${(p) => p.$w}px; display: grid; place-items: center;`;
const Task = styled.button`width: 152px; margin-right: 9px; padding: 0 6px; display: flex; align-items: center; gap: 5px; border-bottom: 2px solid #76b3e2; color: #fff; font-size: 12px;`;
const Tray = styled.div`display: flex; align-items: center; gap: 7px; margin-right: 4px; b { font-size: 15px; font-weight: 500; width: 21px; text-align: center; }`;
const TrayGroup = styled.div`display: flex; align-items: center; gap: 7px; margin-right: 4px;`;
const Clock = styled.time`width: 84px; display: flex; flex-direction: column; justify-content: center; text-align: center; line-height: 18px; padding-left: 4px;`;
const Notice = styled.button`position: relative; width: 50px; display: grid; place-items: center; padding-right: 18px; span { position: absolute; left: 17px; top: 17px; width: 16px; height: 16px; border-radius: 50%; background: #4a5568; border: 1px solid #9aa; font-size: 11px; line-height: 14px; color: #fff; }`;

const Taskbar = () => (
  <Bar>
    <Quick $w={48} aria-label="开始菜单"><Ic w={16} c="none" fill="#fff" d="M0 2l7-1v6.500H0zM8 1l8-1v7.500H8zM0 8.500h7V15l-7-1zM8 8.500h8V16l-8-1z" /></Quick>
    <Quick $w={48} aria-label="搜索"><Ic w={17} c="#fff" sw={1.3} d="M1 15l5-5"><circle cx="10" cy="6" r="5" /></Ic></Quick>
    <Quick $w={56} aria-label="Internet Explorer">
      <Ic w={24} box="0 0 24 24" c="#4fc0f2" sw={4}><path d="M6 12.500h12.500C19 3.500 6 3.500 6 12.500c0 8 9 8.500 12 3.500" /><path d="M3 22C0 19 5 9 13 4s11-3 9 1" stroke="#f2c434" strokeWidth="1.800" /></Ic>
    </Quick>
    <Task>
      <Ic w={24} box="0 0 24 24" c="none"><path d="M0 3h8l2 2h12v14H0z" fill="#4bb4ea" /><path d="M0 19h24v4H0z" fill="#7db928" /><path d="M14 3h6v20h-6z" fill="#8d4a1c" /><path d="M15.500 9h3v6h-3z" fill="#f0c95b" /></Ic>
      1ab1f38f3a81af3...
    </Task>
    <Task>
      <Ic w={24} box="0 0 24 24" c="none"><rect width="24" height="24" rx="2" fill="#e6e1c5" /><path d="M12 0h12v12z" fill="#9ed6a5" /><path d="M0 14l10-2v12H0z" fill="#f0b878" /><path d="M14 13h10v11H14z" fill="#87b5df" /><path d="M2 1l10 13" stroke="#a2315b" strokeWidth="3" /><circle cx="12.500" cy="13.500" r="3" fill="#d81818" /><path d="M14 14v9l2.500-2 1.500 3 1.500-1-1.500-3h3z" fill="#fff" stroke="#222" strokeWidth=".7" /></Ic>
      Pointofix
    </Task>
    <Task>
      <Ic w={24} box="0 0 24 24" c="none"><path d="M5 3h9v19H5z" fill="#f8de85" /><path d="M13 3l4 3v17l-7-1V12l3-1z" fill="#e9b94a" /></Ic>
      C:\NCRE_KSWJJ\6...
    </Task>
    <Task>
      <Ic w={24} box="0 0 24 24" c="#fff" sw={2}><rect x="0" y="0" width="20" height="22" rx="3" fill="#2f86ea" stroke="none" /><path d="M4 7l3 9 4-7 3 6 3-8h-7" strokeWidth="1.600" /><rect x="12" y="13" width="11" height="11" rx="1.500" fill="#6f8df2" stroke="none" /><path d="M15 16v5l2.500-2.500L20 21v-5" strokeWidth="1.300" /></Ic>
      WPS.docx - WPS ...
    </Task>
    <Push />
    <Tray>
      <TrayGroup>
        <Ic w={17} c="none"><circle cx="8" cy="8" r="8" fill="#c3202c" /><path d="M11 1C6 3 5 12 11 15 3 15 3 3 11 1z" fill="#fff" /></Ic>
        <Ic w={17} c="none"><rect x="1" y="1" width="14" height="14" rx="2" fill="#2391ea" /><path d="M5 3c4 2 7 5 5 10L8 10 6 9z" fill="#fff" /></Ic>
        <Ic w={17} c="#e0892b" sw={2} d="M12 5H5v6h6V8H8"><path d="M8 0l2 2H6zM8 16l2-2H6zM0 8l2-2v4zM16 8l-2-2v4z" fill="#999" stroke="none" /></Ic>
        <Ic w={17} c="none"><circle cx="8" cy="8" r="8" fill="#e9d91c" /><circle cx="8" cy="8" r="6" fill="#3ea62f" /><path d="M8 4v8M4 8h8" stroke="#fff" strokeWidth="2" /></Ic>
        <Ic w={17} c="#76b93a" sw={1.3}><rect x="1" y="1" width="14" height="14" fill="#111" stroke="none" /><path d="M3 8c3-5 8-4 10-1-2 5-8 5-10 1zM6 8c1-2 3-2 4 0-1 1-3 1-4 0" /></Ic>
        <Ic w={17} c="#fff"><rect x="5" y="0" width="6" height="10" rx="3" fill="#fff" /><path d="M3 8c0 6 10 6 10 0M8 12v3M5 15.500h6" /></Ic>
        <Ic w={17} c="#fff" d="M4 3h11v8H4zM9.500 11v3M6 14.500h7M1 2h3v5H1zM2.500 7v7H6" />
        <Ic w={17} c="#fff" d="M1 6h2l4-4v12l-4-4H1zM9 6c1 1 1 3 0 4M11 4c2 2 2 6 0 8M13 2c3.500 3 3.500 9 0 12" />
      </TrayGroup>
      <Ic w={18} c="#fff" d="M2 14C0 11 9 9 11 2c1-2 3-1 2 1L7 12c-1 4 3 3 4 0 1-2 3-2 4-1" />
      <b>中</b>
      <SogouS s={18} />
    </Tray>
    <Clock><span>10:46</span><span>2024/5/16</span></Clock>
    <Notice aria-label="通知"><Ic w={18} c="none" fill="#fff"><path d="M1 0h14v12H8l-4 4v-4H1z" /><path d="M3.500 3.500h9M3.500 6h9M3.500 8.500h6" stroke="#223" strokeWidth="1" /></Ic><span>1</span></Notice>
  </Bar>
);

export default function App() {
  return (
    <Screen>
      <Global />
      <Windows>
        <ExamPanel />
        <WpsWindow />
      </Windows>
      <Taskbar />
    </Screen>
  );
}
